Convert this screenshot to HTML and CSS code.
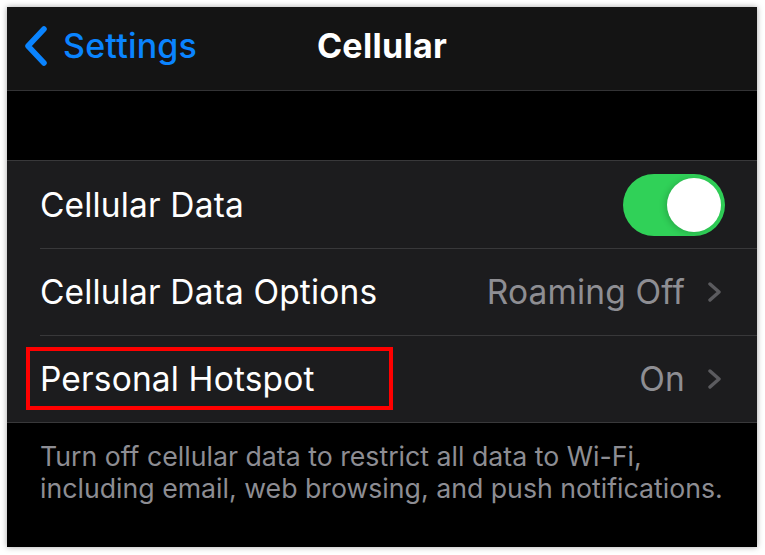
FILE: index.html
```html
<!DOCTYPE html>
<html>
<head>
<meta charset="utf-8">
<link rel="stylesheet" href="styles.css">
</head>
<body>
<div class="frame">
  <header class="nav">
    <div class="back">
      <svg class="back-icon" width="26" height="40" viewBox="0 0 26 40"><path d="M21 3 L5 20 L21 37" fill="none" stroke="#0a84ff" stroke-width="5.5" stroke-linecap="round" stroke-linejoin="round"/></svg>
      <span class="back-label">Settings</span>
    </div>
    <div class="title">Cellular</div>
  </header>
  <div class="spacer"></div>
  <section class="group">
    <div class="row">
      <span class="label">Cellular Data</span>
      <span class="toggle"><span class="knob"></span></span>
    </div>
    <div class="row">
      <span class="label">Cellular Data Options</span>
      <span class="value">Roaming Off</span>
      <svg class="chev" width="16" height="20" viewBox="0 0 16 20"><path d="M3 2 L12 10 L3 18" fill="none" stroke="#5b5b5f" stroke-width="3.4" stroke-linecap="round" stroke-linejoin="round"/></svg>
    </div>
    <div class="row">
      <span class="label">Personal Hotspot</span>
      <span class="value">On</span>
      <svg class="chev" width="16" height="20" viewBox="0 0 16 20"><path d="M3 2 L12 10 L3 18" fill="none" stroke="#5b5b5f" stroke-width="3.4" stroke-linecap="round" stroke-linejoin="round"/></svg>
      <span class="highlight"></span>
    </div>
  </section>
  <p class="footer">Turn off cellular data to restrict all data to Wi-Fi,<br>including email, web browsing, and push notifications.</p>
</div>
</body>
</html>
```
FILE: styles.css
```css
html, body {
  margin: 0;
  padding: 0;
  background: #ffffff;
}
body {
  font-family: Inter, "Noto Sans", "Liberation Sans", sans-serif;
}
.frame {
  margin: 7px;
  width: 750px;
  height: 540px;
  background: #000;
  box-shadow: 0 0 6px rgba(0,0,0,0.35);
  display: flex;
  flex-direction: column;
  overflow: hidden;
}
.nav {
  position: relative;
  height: 84px;
  box-sizing: border-box;
  padding-bottom: 6px;
  background: #141414;
  border-bottom: 1px solid #333335;
  display: flex;
  align-items: center;
  flex-shrink: 0;
}
.back {
  display: flex;
  align-items: center;
  margin-left: 16px;
  gap: 14px;
}
.back-icon {
  display: block;
}
.back-label {
  color: #0a84ff;
  font-size: 34px;
  font-weight: 500;
  letter-spacing: 0.2px;
}
.title {
  position: absolute;
  left: 0;
  right: 0;
  top: 0;
  bottom: 6px;
  display: flex;
  align-items: center;
  justify-content: center;
  color: #fff;
  font-size: 34px;
  font-weight: 700;
  letter-spacing: 0.3px;
  pointer-events: none;
}
.spacer {
  height: 69px;
  flex-shrink: 0;
}
.group {
  background: #1c1c1e;
  border-top: 1px solid #38383a;
  border-bottom: 1px solid #38383a;
  flex-shrink: 0;
}
.row {
  position: relative;
  height: 87px;
  display: flex;
  align-items: center;
  padding-left: 33px;
  padding-right: 34px;
}
.row + .row::before {
  content: "";
  position: absolute;
  left: 33px;
  right: 0;
  top: 0;
  height: 1px;
  background: #38383a;
}
.label {
  color: #fff;
  font-size: 33.5px;
  font-weight: 400;
  letter-spacing: 0.15px;
  flex: 1;
}
.value {
  color: #8e8e93;
  font-size: 33.5px;
  letter-spacing: 0.15px;
  margin-right: 22px;
}
.chev {
  display: block;
}
.toggle {
  position: relative;
  width: 102px;
  height: 62px;
  border-radius: 31px;
  background: #30d158;
  margin-right: -2px;
}
.knob {
  position: absolute;
  right: 4px;
  top: 4px;
  width: 54px;
  height: 54px;
  border-radius: 50%;
  background: #fff;
  box-shadow: -2px 1px 6px rgba(0,0,0,0.18);
}
.highlight {
  position: absolute;
  left: 19px;
  top: 12px;
  width: 359px;
  height: 55px;
  border: 4px solid #ff0000;
}
.footer {
  margin: 17px 0 0 33px;
  color: #8d8d93;
  font-size: 26.7px;
  line-height: 32px;
}
```
